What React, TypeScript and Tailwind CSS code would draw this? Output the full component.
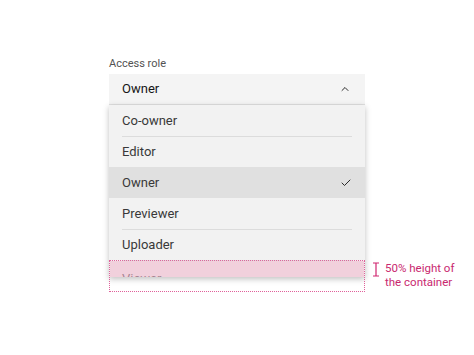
import React from 'react';
import { ChevronUp, Check } from 'lucide-react';

const items = ['Co-owner', 'Editor', 'Owner', 'Previewer', 'Uploader', 'Viewer'];

export default function App() {
  const selected = 'Owner';
  return (
    <div className="w-[474px] h-[355px] bg-white relative overflow-hidden font-['Roboto',sans-serif]">
      <div className="pl-[109px] pt-[57px] w-[365px]">
        <div className="text-[11px] leading-[14px] text-[#525252] mb-[3px]">Access role</div>

        {/* Field */}
        <div className="h-[31px] bg-[#f4f4f4] border-b border-[#e0e0e0] flex items-center justify-between pl-[13px] pr-[14px]">
          <span className="text-[13px] text-[#161616]">Owner</span>
          <ChevronUp size={12} strokeWidth={1.8} className="text-[#161616]" />
        </div>

        {/* Menu */}
        <div className="relative">
          <div className="h-[172px] overflow-hidden bg-[#f2f2f2] shadow-[0_2px_6px_rgba(0,0,0,0.25)]">
            {items.map((item, i) => {
              const isSel = item === selected;
              const prevSel = i > 0 && items[i - 1] === selected;
              const showDivider = i > 0 && !isSel && !prevSel;
              return (
                <div
                  key={item}
                  className={`h-[31px] px-[13px] ${isSel ? 'bg-[#e0e0e0]' : ''}`}
                >
                  <div
                    className={`h-full flex items-center justify-between border-t ${showDivider ? 'border-[#dcdcdc]' : 'border-transparent'}`}
                  >
                    <span className={`text-[13px] text-[#393939] ${i === items.length - 1 ? 'translate-y-[3px]' : ''}`}>{item}</span>
                    {isSel && <Check size={12} strokeWidth={1.8} className="text-[#161616]" />}
                  </div>
                </div>
              );
            })}
          </div>

          {/* Annotation overlay */}
          <div className="absolute left-0 top-[155px] w-[256px] h-[32px] border border-dotted border-[#e0609a]">
            <div className="h-[16px] bg-[#f0b9cd]/60" />
          </div>
          <div className="absolute left-[262px] top-[156px] flex gap-[4px] whitespace-nowrap">
            <svg width="10" height="15" viewBox="0 0 10 15" className="mt-[1px]">
              <path d="M2 1h6M5 1v13M2 14h6" stroke="#d02670" strokeWidth="1.2" fill="none" />
            </svg>
            <div className="text-[11.5px] leading-[14px] text-[#c9286f]">
              50% height of
              <br />
              the container
            </div>
          </div>
        </div>
      </div>
    </div>
  );
}
